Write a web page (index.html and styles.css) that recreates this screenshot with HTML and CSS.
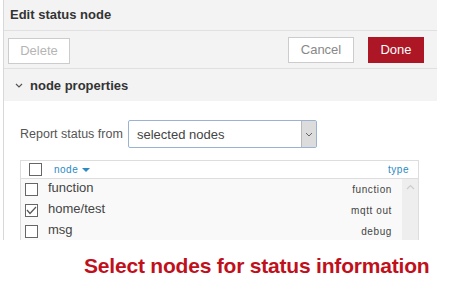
FILE: index.html
```html
<!DOCTYPE html>
<html lang="en">
<head>
  <meta charset="UTF-8">
  <title>Edit status node</title>
  <link rel="stylesheet" href="styles.css">
</head>
<body>
  <div class="tray">
    <div class="tray-title">Edit status node</div>
    <div class="tray-toolbar">
      <button class="btn btn-disabled">Delete</button>
      <span class="spacer"></span>
      <button class="btn btn-cancel">Cancel</button>
      <button class="btn btn-primary">Done</button>
    </div>
    <div class="section-head">
      <svg class="chevron" width="8" height="5" viewBox="0 0 8 5"><path d="M1 1l3 3 3-3" fill="none" stroke="#555" stroke-width="1.2"/></svg>
      <span>node properties</span>
    </div>
    <div class="section-body">
      <div class="form-row">
        <label>Report status from</label>
        <div class="select">
          <span class="select-value">selected nodes</span>
          <span class="select-arrow">
            <svg width="8" height="5" viewBox="0 0 8 5"><path d="M1 1l3 3 3-3" fill="none" stroke="#666" stroke-width="1"/></svg>
          </span>
        </div>
      </div>
      <div class="node-list">
        <div class="list-head">
          <span class="check"></span>
          <span class="col-node">node <span class="caret"></span></span>
          <span class="col-type">type</span>
        </div>
        <div class="list-body">
          <div class="rows">
            <div class="row">
              <span class="check"></span>
              <span class="name">function</span>
              <span class="type">function</span>
            </div>
            <div class="row">
              <span class="check checked">
                <svg width="11" height="9" viewBox="0 0 11 9"><path d="M1 4l3 3.5L10 1" fill="none" stroke="#555" stroke-width="1.2"/></svg>
              </span>
              <span class="name">home/test</span>
              <span class="type">mqtt out</span>
            </div>
            <div class="row">
              <span class="check"></span>
              <span class="name">msg</span>
              <span class="type">debug</span>
            </div>
          </div>
          <div class="scrollbar">
            <svg width="9" height="6" viewBox="0 0 9 6"><path d="M1 5l3.5-3.5L8 5" fill="none" stroke="#ccc" stroke-width="1.2"/></svg>
          </div>
        </div>
      </div>
    </div>
  </div>

  <p class="caption">Select nodes for status information</p>
</body>
</html>
```

FILE: styles.css
```css
*{
  margin: 0;
  padding: 0;
  box-sizing: border-box;
}

body{
  background: #fff;
  font-family: "Liberation Sans", Arial, sans-serif;
  color: #333;
}

.tray{
  width: 434px;
  height: 240px;
  margin-left: 3px;
  border-left: 1px solid #d8d8d8;
  overflow: hidden;
}
.tray-title{
  height: 31px;
  padding: 7px 0 0 6px;
  background: #f3f3f3;
  border-bottom: 1px solid #e0e0e0;
  font-size: 13px;
  font-weight: bold;
  color: #333;
}
.tray-toolbar{
  display: flex;
  align-items: center;
  height: 38px;
  padding: 0 13px 0 4px;
  background: #f3f3f3;
  border-bottom: 1px solid #e0e0e0;
}
.spacer{
  flex: 1;
}
.btn{
  height: 26px;
  padding: 0;
  border: 1px solid #ccc;
  background: #fff;
  color: #888;
  font-family: inherit;
  font-size: 13px;
}
.btn-disabled{
  width: 62px;
  margin-top: 2px;
  color: #b5b5b5;
}
.btn-cancel{
  width: 66px;
}
.btn + .btn{
  margin-left: 14px;
}
.btn-primary{
  width: 56px;
  background: #ad1625;
  border-color: #ad1625;
  color: #fff;
}

.section-head{
  display: flex;
  align-items: center;
  height: 32px;
  padding-left: 11px;
  background: #f3f3f3;
  font-size: 13px;
  font-weight: bold;
  color: #333;
}
.chevron{
  margin-right: 7px;
}

.section-body{
  padding: 19px 0 0 16px;
  background: #fff;
}
.form-row{
  display: flex;
  align-items: center;
  font-size: 12.5px;
  color: #555;
}
.form-row label{
  width: 108px;
}
.select{
  display: flex;
  width: 189px;
  height: 28px;
  border: 1px solid #9bb3d3;
  border-radius: 2px;
  background: #fff;
  font-size: 13px;
}
.select-value{
  flex: 1;
  padding: 6px 0 0 8px;
  color: #444;
}
.select-arrow{
  display: flex;
  align-items: center;
  justify-content: center;
  width: 15px;
  background: #dcdcdc;
  border-left: 1px solid #b9b9b9;
}

.node-list{
  width: 399px;
  margin-top: 12px;
  border: 1px solid #ddd;
  border-bottom: 0;
}
.list-head{
  display: flex;
  align-items: center;
  height: 18px;
  padding: 0 9px 0 8px;
  border-bottom: 1px solid #ddd;
  font-size: 10px;
  color: #2a8ac4;
  letter-spacing: 0.5px;
}
.list-head .check{
  margin-right: 12px;
}
.col-node{
  flex: 1;
}
.caret{
  display: inline-block;
  width: 0;
  height: 0;
  border-left: 4px solid transparent;
  border-right: 4px solid transparent;
  border-top: 4px solid #2a8ac4;
  vertical-align: 1px;
}
.list-body{
  display: flex;
  background: #f9f9f9;
}
.rows{
  flex: 1;
}
.row{
  display: flex;
  align-items: center;
  height: 21px;
  padding: 0 10px 0 4px;
}
.check{
  display: flex;
  align-items: center;
  justify-content: center;
  width: 13px;
  height: 13px;
  border: 1px solid #666;
  background: #fff;
}
.row .check{
  margin-right: 10px;
}
.name{
  flex: 1;
  font-size: 13px;
  color: #444;
  margin-top: -5px;
}
.type{
  font-size: 10px;
  color: #444;
  letter-spacing: 0.6px;
}
.scrollbar{
  width: 16px;
  height: 64px;
  padding-top: 5px;
  display: flex;
  justify-content: center;
  align-items: flex-start;
  background: #eee;
}

.caption{
  padding: 14px 0 0 84px;
  font-size: 21px;
  letter-spacing: -0.2px;
  font-weight: bold;
  color: #c0101c;
}
```
